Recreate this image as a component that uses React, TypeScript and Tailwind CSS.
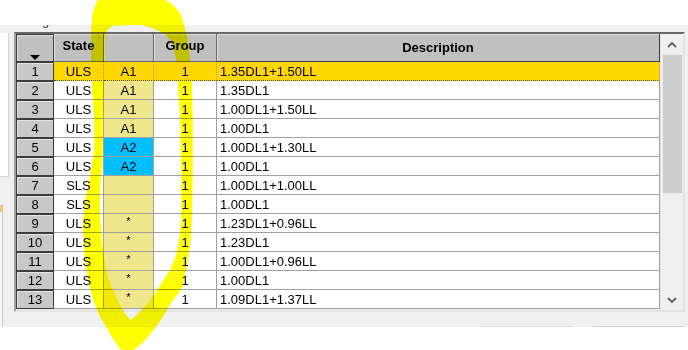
import React from "react";

type Row = [number, string, string, string, string];

const rows: Row[] = [
  [1, "ULS", "A1", "1", "1.35DL1+1.50LL"],
  [2, "ULS", "A1", "1", "1.35DL1"],
  [3, "ULS", "A1", "1", "1.00DL1+1.50LL"],
  [4, "ULS", "A1", "1", "1.00DL1"],
  [5, "ULS", "A2", "1", "1.00DL1+1.30LL"],
  [6, "ULS", "A2", "1", "1.00DL1"],
  [7, "SLS", "", "1", "1.00DL1+1.00LL"],
  [8, "SLS", "", "1", "1.00DL1"],
  [9, "ULS", "*", "1", "1.23DL1+0.96LL"],
  [10, "ULS", "*", "1", "1.23DL1"],
  [11, "ULS", "*", "1", "1.00DL1+0.96LL"],
  [12, "ULS", "*", "1", "1.00DL1"],
  [13, "ULS", "*", "1", "1.09DL1+1.37LL"],
];

const outer: [number, number][] = [
  [92, 30], [93, 15], [96, 5], [100, -2], [160, -2], [172, 5], [180, 14], [184, 28],
  [188, 45], [191, 80], [192, 120], [192, 180], [191, 220], [190, 240], [188, 255],
  [185, 270], [182, 287], [170, 303], [160, 320], [147, 337], [137, 347], [128, 351],
  [120, 348], [113, 337], [106, 325], [100, 315], [95, 303], [90, 285], [87, 270],
  [85, 250], [84, 230], [84, 220], [86, 200], [92, 170], [95, 150], [95, 120],
  [93, 90], [92, 60],
];
const inner: [number, number][] = [
  [104, 40], [106, 30], [113, 25], [140, 24], [152, 27], [165, 33], [173, 42], [177, 60],
  [179, 90], [181, 120], [182, 180], [182, 220], [180, 240], [177, 255], [171, 270],
  [160, 287], [149, 303], [140, 313], [131, 321], [125, 315], [118, 303], [112, 290],
  [106, 275], [103, 255], [101, 240], [100, 225], [99, 205], [100, 180], [101, 165],
  [102, 150], [102, 120], [103, 90], [104, 60],
];
const toPath = (pts: [number, number][]) =>
  "M" + pts.map((p) => `${p[0]} ${p[1]}`).join(" L") + " Z";

function Highlighter() {
  return (
    <svg
      className="absolute left-0 top-0 pointer-events-none mix-blend-multiply"
      width={688}
      height={350}
      viewBox="0 0 688 350"
    >
      <path
        d={toPath(outer) + " " + toPath(inner)}
        fill="#ffff00"
        fillRule="evenodd"
        stroke="#ffff00"
        strokeWidth={1.5}
        strokeLinejoin="round"
      />
    </svg>
  );
}

const rhCell =
  "w-[38px] h-[19px] box-border border border-[#3c3c3c] bg-[#c8c8c8] shadow-[inset_1px_1px_0_#e6e6e6] flex items-center justify-center";

export default function App() {
  return (
    <div
      className="relative w-[688px] h-[350px] overflow-hidden bg-white text-[13px] text-black"
      style={{ fontFamily: '"Liberation Sans", Arial, sans-serif' }}
    >
      <div className="h-[25px] bg-white" />
      <div className="h-[302px] bg-[#f0f0f0] flex">
        {/* left cut-off panel */}
        <div className="w-[14px] flex flex-col">
          <div className="h-[8px]" />
          <div className="w-[9px] h-[144px] bg-white border-r border-b border-[#d4d4d4]" />
          <div className="h-[28px]" />
          <div className="w-[3px] flex-1 border-r border-[#c8c8c8] bg-[#f7f7f7]">
            <div className="h-[7px] bg-[#e8d44a]" />
          </div>
        </div>
        <div className="flex flex-col">
          <div className="h-[7px] overflow-hidden pl-[28px]">
            <div className="-mt-[12px] leading-[16px] text-[#333]">g</div>
          </div>
          {/* grid frame */}
          <div className="w-[671px] h-[280px] box-border border-2 border-t-[#696969] border-l-[#a0a0a0] border-r-[#e3e3e3] border-b-[#e3e3e3] flex bg-[#f0f0f0]">
            <div className="w-[644px] flex flex-col overflow-hidden">
              {/* header */}
              <div className="flex h-[28px] shrink-0">
                <div className="w-[38px] h-[28px] box-border border border-[#3c3c3c] bg-[#c0c0c0] shadow-[inset_1px_1px_0_#e0e0e0] flex items-end justify-center pb-[1px]">
                  <svg width="10" height="5" viewBox="0 0 10 5">
                    <path d="M0 0 H10 L5 5 Z" fill="#000" />
                  </svg>
                </div>
                <div className="w-[50px] h-[28px] box-border border-r border-b border-[#696969] bg-[#c0c0c0] shadow-[inset_1px_1px_0_#e0e0e0] flex justify-center pt-[2px] font-bold">
                  State
                </div>
                <div className="w-[50px] h-[28px] box-border border-r border-b border-[#696969] bg-[#c0c0c0] shadow-[inset_1px_1px_0_#e0e0e0]" />
                <div className="w-[63px] h-[28px] box-border border-r border-b border-[#696969] bg-[#c0c0c0] shadow-[inset_1px_1px_0_#e0e0e0] flex justify-center pt-[2px] font-bold">
                  Group
                </div>
                <div className="w-[443px] h-[28px] box-border border-r border-b border-[#3c3c3c] bg-[#c0c0c0] shadow-[inset_1px_1px_0_#e0e0e0] flex items-center justify-center pt-[1px] font-bold">
                  Description
                </div>
              </div>
              {rows.map((r) => {
                const sel = r[0] === 1;
                const cellBase =
                  "h-[19px] box-border border-r border-b border-[#a0a0a0] flex items-center leading-none";
                const selCls = sel ? " bg-[#ffd700] border-b-[#5a4a00] border-dotted" : "";
                const colBg = sel
                  ? "bg-[#ffd700]"
                  : r[2] === "A2"
                  ? "bg-[#00bfff]"
                  : "bg-[#f0e68c]";
                return (
                  <div key={r[0]} className="flex shrink-0">
                    <div className={rhCell}>{r[0]}</div>
                    <div className={`w-[50px] justify-center ${cellBase} ${sel ? "" : "bg-white"}${selCls}`}>
                      {r[1]}
                    </div>
                    <div className={`w-[50px] justify-center ${cellBase} ${colBg}${selCls}`}>
                      {r[2] === "*" ? <span className="text-[11px] -mt-[3px]">*</span> : r[2]}
                    </div>
                    <div className={`w-[63px] justify-center ${cellBase} ${sel ? "" : "bg-white"}${selCls}`}>
                      {r[3]}
                    </div>
                    <div className={`w-[443px] pl-[3px] ${cellBase} ${sel ? "" : "bg-white"}${selCls}`}>
                      {r[4]}
                    </div>
                  </div>
                );
              })}
            </div>
            {/* scrollbar */}
            <div className="w-[23px] flex flex-col items-center bg-[#f0f0f0] border-l border-[#e8e8e8]">
              <div className="h-[21px] w-full flex items-center justify-center">
                <svg width="10" height="7" viewBox="0 0 10 7">
                  <path d="M1 6 L5 2 L9 6" fill="none" stroke="#606060" strokeWidth="1.8" />
                </svg>
              </div>
              <div className="w-[19px] h-[138px] bg-[#cdcdcd]" />
              <div className="flex-1" />
              <div className="h-[20px] w-full flex items-center justify-center">
                <svg width="10" height="7" viewBox="0 0 10 7">
                  <path d="M1 1 L5 5 L9 1" fill="none" stroke="#606060" strokeWidth="1.8" />
                </svg>
              </div>
            </div>
          </div>
          {/* bottom buttons cut-off */}
          <div className="flex-1 flex items-end">
            <div className="ml-[466px] w-[92px] h-[1px] bg-[#dadada]" />
            <div className="ml-[21px] w-[92px] h-[1px] bg-[#cfcfcf]" />
          </div>
        </div>
      </div>
      <div className="flex-1 bg-white" />
      <Highlighter />
    </div>
  );
}
